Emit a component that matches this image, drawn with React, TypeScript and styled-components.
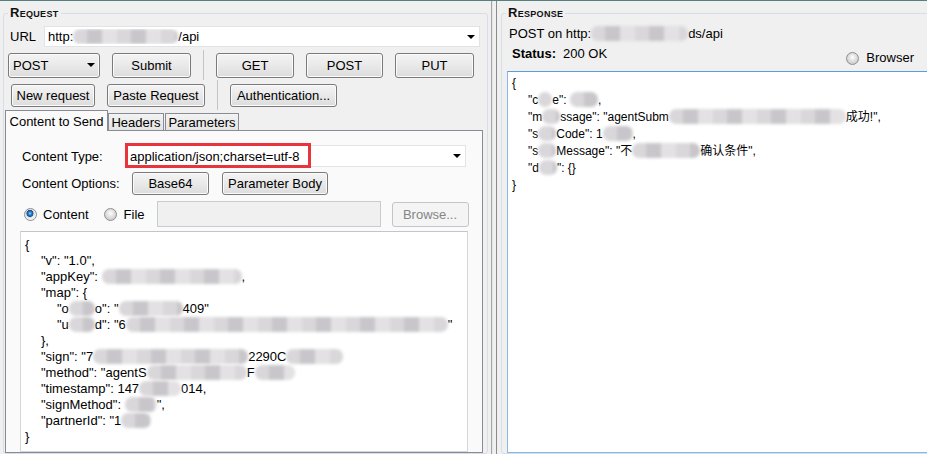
import React from "react";
import styled, { createGlobalStyle } from "styled-components";

const GlobalStyle = createGlobalStyle`
  html, body {
    margin: 0;
    padding: 0;
    background: #f0f0f0;
  }
  body {
    font-family: "Liberation Sans", Arial, "Noto Sans CJK SC", sans-serif;
    font-size: 13px;
    color: #000;
  }
`;

const Frame = styled.div`
  width: 927px;
  height: 454px;
  box-sizing: border-box;
  overflow: hidden;
  border-top: 1px solid #54807f;
  background: #f0f0f0;
  display: flex;
`;

const Column = styled.div<{ $w: number }>`
  width: ${(p) => p.$w}px;
  flex: none;
  display: flex;
  flex-direction: column;
`;

const GroupBox = styled.fieldset<{ $left: number }>`
  margin: 5px 0 0 ${(p) => p.$left}px;
  padding: 0;
  min-width: 0;
  height: 480px;
  box-sizing: border-box;
  border: 1px solid #d5dfe5;
  border-radius: 3px;
  display: flex;
  flex-direction: column;
`;

const Legend = styled.legend`
  margin-left: 4px;
  padding: 0 2px;
  font-weight: bold;
  font-variant: small-caps;
  font-size: 13px;
  line-height: 14px;
  letter-spacing: 0.3px;
  color: #111;
`;

const Splitter = styled.div`
  width: 13px;
  flex: none;
  background: linear-gradient(
    90deg,
    #f0f0f0 0 3px,
    #a4a4a4 3px 4px,
    #e6e6e6 4px 5px,
    #f0f0f0 5px 8px,
    #8a8a8a 8px 9px,
    #f0f0f0 9px
  );
`;

const UrlRow = styled.div`
  margin-top: 6px;
  height: 21px;
  padding: 0 7px 0 6px;
  display: flex;
  align-items: center;
`;

const UrlLabel = styled.span`
  width: 34px;
  flex: none;
`;

const ComboBox = styled.div<{ $h: number }>`
  position: relative;
  flex: 1;
  height: ${(p) => p.$h}px;
  box-sizing: border-box;
  background: #fff;
  border: 1px solid #e2e3e6;
  display: flex;
  align-items: center;
  padding: 0 4px 0 3px;
`;

const ComboText = styled.span`
  flex: 1;
  white-space: nowrap;
  overflow: hidden;
`;

const Arrow = styled.span`
  flex: none;
  width: 0;
  height: 0;
  border-left: 4px solid transparent;
  border-right: 4px solid transparent;
  border-top: 4px solid #000;
`;

const Highlight = styled.span`
  position: absolute;
  left: -2px;
  top: -3px;
  width: 186px;
  height: 25px;
  box-sizing: border-box;
  border: 3px solid #e8343c;
  pointer-events: none;
`;

const ButtonRow = styled.div<{ $pad: number; $top?: number }>`
  height: 30px;
  margin-top: ${(p) => p.$top ?? 0}px;
  padding-left: ${(p) => p.$pad}px;
  display: flex;
  align-items: center;
  gap: 12px;
`;

const Button = styled.button<{ $w: number; $h?: number; $disabled?: boolean }>`
  width: ${(p) => p.$w}px;
  height: ${(p) => p.$h ?? 23}px;
  flex: none;
  box-sizing: border-box;
  padding: 0;
  border: 1px solid ${(p) => (p.$disabled ? "#c3c5c8" : "#7a7a7a")};
  border-radius: 3px;
  background: ${(p) =>
    p.$disabled ? "#f4f4f4" : "linear-gradient(#f4f4f4, #e9e9e9 50%, #dcdcdc)"};
  box-shadow: ${(p) => (p.$disabled ? "none" : "inset 0 0 0 1px #fbfbfb")};
  font-family: inherit;
  font-size: 13px;
  color: ${(p) => (p.$disabled ? "#858585" : "#000")};
  display: flex;
  align-items: center;
  justify-content: center;
`;

const SelectButton = styled(Button)`
  justify-content: space-between;
  padding: 0 4px 0 4px;
`;

const Separator = styled.div`
  width: 1px;
  align-self: stretch;
  background: #c4c4c4;
`;

const TabStrip = styled.div`
  height: 20px;
  margin-left: 1px;
  display: flex;
  align-items: flex-end;
`;

const Tab = styled.div<{ $w: number; $active?: boolean; $gap?: number }>`
  width: ${(p) => p.$w}px;
  height: ${(p) => (p.$active ? 21 : 17)}px;
  margin-left: ${(p) => p.$gap ?? 0}px;
  margin-bottom: ${(p) => (p.$active ? -1 : 0)}px;
  box-sizing: border-box;
  border: 1px solid #898c95;
  border-bottom: none;
  background: ${(p) => (p.$active ? "#fafafa" : "linear-gradient(#f3f3f3, #e4e4e4)")};
  display: flex;
  align-items: center;
  justify-content: center;
  white-space: nowrap;
  position: relative;
  z-index: ${(p) => (p.$active ? 1 : 0)};
`;

const TabPanel = styled.div`
  flex: 1;
  margin: 0 4px 0 1px;
  padding: 14px 14px 0 14px;
  border: 1px solid #898c95;
  background: #fafafa;
  display: flex;
  flex-direction: column;
`;

const FieldRow = styled.div<{ $h: number; $top?: number; $pad?: number }>`
  height: ${(p) => p.$h}px;
  margin-top: ${(p) => p.$top ?? 0}px;
  padding: 0 2px 0 ${(p) => p.$pad ?? 2}px;
  display: flex;
  align-items: center;
`;

const FieldLabel = styled.span<{ $w: number }>`
  width: ${(p) => p.$w}px;
  flex: none;
`;

const Radio = styled.span<{ $checked?: boolean }>`
  width: 13px;
  height: 13px;
  flex: none;
  box-sizing: border-box;
  border-radius: 50%;
  border: 1px solid #8e8f8f;
  background: ${(p) =>
    p.$checked
      ? "radial-gradient(circle at 45% 40%, #9fdcff 0, #2d86d6 1.5px, #154d8e 3.2px, #dcdcdc 3.8px, #f6f6f6 6px)"
      : "radial-gradient(circle at 50% 40%, #ffffff 0, #eeeeee 2px, #cfcfcf 6px)"};
`;

const RadioLabel = styled.span<{ $gap: number; $after: number }>`
  margin-left: ${(p) => p.$gap}px;
  margin-right: ${(p) => p.$after}px;
`;

const PathField = styled.div`
  width: 224px;
  height: 26px;
  flex: none;
  box-sizing: border-box;
  border: 1px solid #c9cbce;
  background: #f0f0f0;
  margin-right: 11px;
`;

const CodeBox = styled.div<{ $lh: number; $focus?: boolean }>`
  flex: 1;
  box-sizing: border-box;
  background: #fff;
  border: 1px solid ${(p) => (p.$focus ? "#86b8ea" : "#d3d7dc")};
  border-top-color: ${(p) => (p.$focus ? "#569de5" : "#c2c6cc")};
  padding: ${(p) => (p.$focus ? 3 : 5)}px 4px;
  line-height: ${(p) => p.$lh}px;
  white-space: pre;
  overflow: hidden;
`;

const CodeArea = styled(CodeBox)`
  margin-top: 4px;
`;

const Line = styled.div<{ $indent?: number }>`
  padding-left: ${(p) => (p.$indent ?? 0) * 16}px;
`;

const Smudge = styled.span<{ $w: number }>`
  display: inline-block;
  width: ${(p) => p.$w}px;
  height: 15px;
  vertical-align: middle;
  margin-top: -3px;
  border-radius: 7px;
  background: repeating-linear-gradient(
    90deg,
    #d9d7da 0 14px,
    #c8c6ca 14px 29px,
    #e3e1e3 29px 44px
  );
  filter: blur(1.5px);
`;

const InfoLine = styled.div`
  margin-top: 6px;
  padding-left: 7px;
  line-height: 16px;
  white-space: nowrap;
`;

const StatusRow = styled.div`
  height: 25px;
  margin-top: 4px;
  padding: 0 26px 0 10px;
  display: flex;
  align-items: flex-start;
  justify-content: space-between;
`;

const StatusText = styled.div`
  line-height: 16px;
  display: flex;
  gap: 7px;
`;

const Bold = styled.span`
  font-weight: bold;
`;

const BrowserToggle = styled.div`
  margin-top: 4px;
  line-height: 16px;
  display: flex;
  align-items: center;
`;

const ResponseArea = styled(CodeBox)`
  margin-left: 5px;
  font-size: 12px;
`;

export default function App() {
  return (
    <>
      <GlobalStyle />
      <Frame>
        <Column $w={488}>
          <GroupBox $left={3}>
            <Legend>Request</Legend>
            <UrlRow>
              <UrlLabel>URL</UrlLabel>
              <ComboBox $h={21}>
                <ComboText>
                  http:<Smudge $w={105} />/api
                </ComboText>
                <Arrow />
              </ComboBox>
            </UrlRow>
            <ButtonRow $pad={4} $top={3}>
              <SelectButton $w={92} $h={25}>
                POST
                <Arrow />
              </SelectButton>
              <Button $w={79} $h={25}>Submit</Button>
              <Separator />
              <Button $w={78} $h={25}>GET</Button>
              <Button $w={77} $h={25}>POST</Button>
              <Button $w={79} $h={25}>PUT</Button>
            </ButtonRow>
            <ButtonRow $pad={7}>
              <Button $w={84}>New request</Button>
              <Button $w={98}>Paste Request</Button>
              <Separator />
              <Button $w={107}>Authentication...</Button>
            </ButtonRow>
            <TabStrip>
              <Tab $w={103} $active>
                Content to Send
              </Tab>
              <Tab $w={56}>Headers</Tab>
              <Tab $w={74} $gap={1}>
                Parameters
              </Tab>
            </TabStrip>
            <TabPanel>
              <FieldRow $h={22}>
                <FieldLabel $w={104}>Content Type:</FieldLabel>
                <ComboBox $h={22}>
                  <Highlight />
                  <ComboText>application/json;charset=utf-8</ComboText>
                  <Arrow />
                </ComboBox>
              </FieldRow>
              <FieldRow $h={23} $top={5}>
                <FieldLabel $w={110}>Content Options:</FieldLabel>
                <Button $w={77}>Base64</Button>
                <Button $w={106} style={{ marginLeft: 13 }}>
                  Parameter Body
                </Button>
              </FieldRow>
              <FieldRow $h={26} $top={6} $pad={4}>
                <Radio $checked />
                <RadioLabel $gap={6} $after={15}>Content</RadioLabel>
                <Radio />
                <RadioLabel $gap={7} $after={12}>File</RadioLabel>
                <PathField />
                <Button $w={77} $h={25} $disabled>
                  Browse...
                </Button>
              </FieldRow>
              <CodeArea $lh={16}>
                <Line>{"{"}</Line>
                <Line $indent={1}>"v": "1.0",</Line>
                <Line $indent={1}>
                  {'"appKey": '}
                  <Smudge $w={140} />,
                </Line>
                <Line $indent={1}>{'"map": {'}</Line>
                <Line $indent={2}>
                  "o<Smudge $w={26} />
                  {'o": "'}
                  <Smudge $w={64} />
                  409"
                </Line>
                <Line $indent={2}>
                  "u<Smudge $w={26} />
                  {'d": "6'}
                  <Smudge $w={322} />"
                </Line>
                <Line $indent={1}>{"},"}</Line>
                <Line $indent={1}>
                  {'"sign": "7'}
                  <Smudge $w={155} />
                  2290C
                  <Smudge $w={57} />
                </Line>
                <Line $indent={1}>
                  {'"method": "agentS'}
                  <Smudge $w={100} />F<Smudge $w={40} />
                </Line>
                <Line $indent={1}>
                  {'"timestamp": 147'}
                  <Smudge $w={42} />
                  014,
                </Line>
                <Line $indent={1}>
                  {'"signMethod": '}
                  <Smudge $w={32} />
                  ",
                </Line>
                <Line $indent={1}>
                  {'"partnerId": "1'}
                  <Smudge $w={30} />
                </Line>
                <Line>{"}"}</Line>
              </CodeArea>
            </TabPanel>
          </GroupBox>
        </Column>
        <Splitter />
        <Column $w={440}>
          <GroupBox $left={0}>
            <Legend>Response</Legend>
            <InfoLine>
              POST on http:<Smudge $w={97} />ds/api
            </InfoLine>
            <StatusRow>
              <StatusText>
                <Bold>Status:</Bold>
                <span>200 OK</span>
              </StatusText>
              <BrowserToggle>
                <Radio />
                <RadioLabel $gap={7} $after={0}>Browser</RadioLabel>
              </BrowserToggle>
            </StatusRow>
            <ResponseArea $lh={17} $focus>
              <Line>{"{"}</Line>
              <Line $indent={1}>
                "c<Smudge $w={14} />
                {'e": '}
                <Smudge $w={28} />,
              </Line>
              <Line $indent={1}>
                "m<Smudge $w={18} />
                {'ssage": "agentSubm'}
                <Smudge $w={177} />
                成功!",
              </Line>
              <Line $indent={1}>
                "s<Smudge $w={18} />
                {'Code": 1'}
                <Smudge $w={30} />,
              </Line>
              <Line $indent={1}>
                "s<Smudge $w={18} />
                {'Message": "不'}
                <Smudge $w={68} />
                确认条件",
              </Line>
              <Line $indent={1}>
                "d<Smudge $w={18} />
                {'": {}'}
              </Line>
              <Line>{"}"}</Line>
            </ResponseArea>
          </GroupBox>
        </Column>
      </Frame>
    </>
  );
}
